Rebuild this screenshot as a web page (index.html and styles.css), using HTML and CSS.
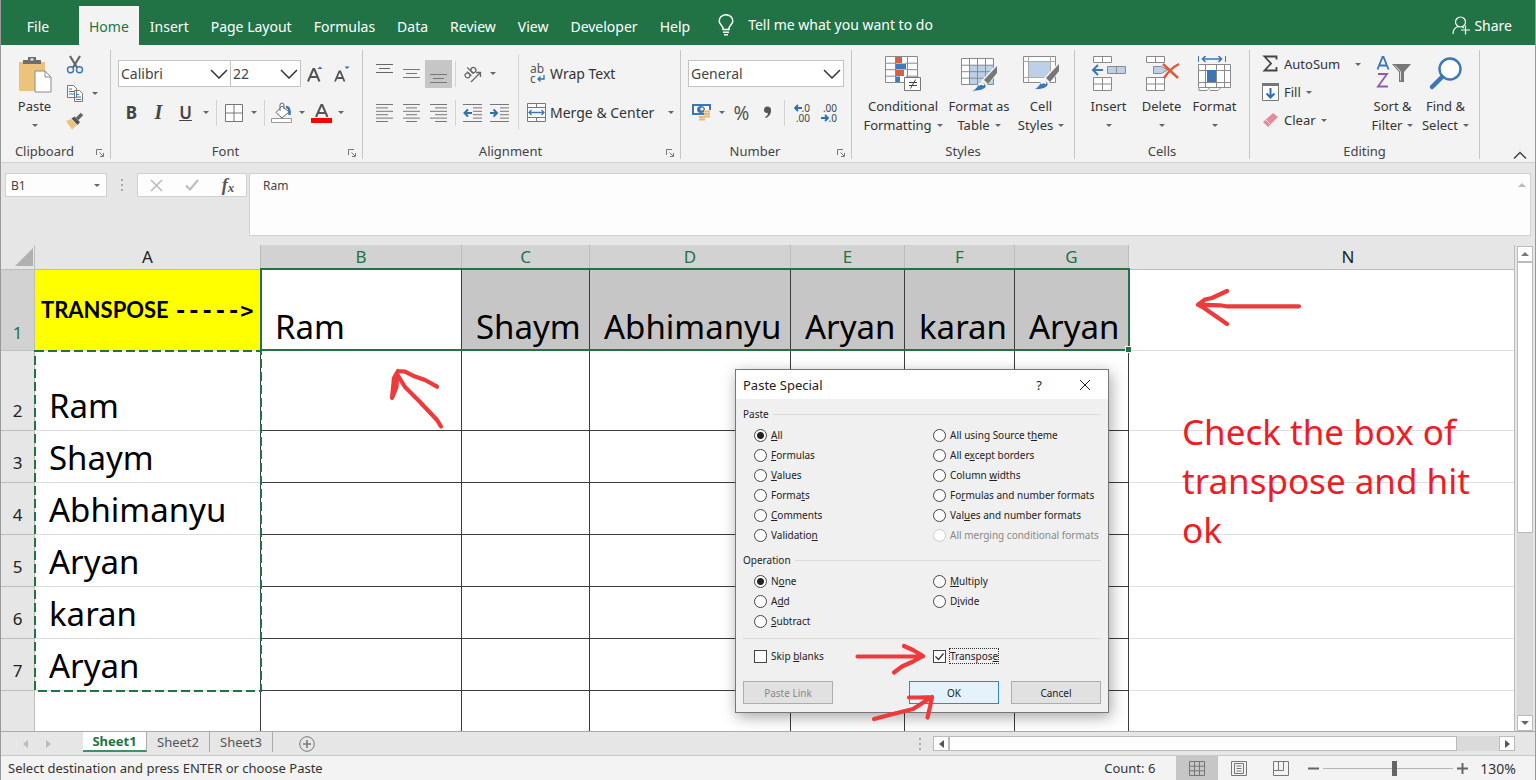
FILE: index.html
```html
<!DOCTYPE html>
<html lang="en">
<head>
<meta charset="utf-8">
<title>Spreadsheet - Paste Special</title>
<link rel="stylesheet" href="styles.css">
</head>
<body>
<div class="app">
  <nav class="tabs" aria-label="Ribbon tabs">
    <button class="tab tab-file">File</button>
    <button class="tab tab-active">Home</button>
    <button class="tab">Insert</button>
    <button class="tab">Page Layout</button>
    <button class="tab">Formulas</button>
    <button class="tab">Data</button>
    <button class="tab">Review</button>
    <button class="tab">View</button>
    <button class="tab">Developer</button>
    <button class="tab">Help</button>
    <button class="tell-me">
      <svg width="16" height="22" viewBox="0 0 16 22" fill="none" stroke="#fff" stroke-width="1.5"><path d="M5 15.500V14C5 12 1.200 10.500 1.200 7a6.800 6.300 0 0 1 13.600 0c0 3.500-3.800 5-3.800 7v1.500zM5 18.300h6M6 20.800h4"/></svg>
      <span>Tell me what you want to do</span>
    </button>
    <button class="share">
      <svg width="18" height="19" viewBox="0 0 18 19" fill="none" stroke="#fff" stroke-width="1.200"><circle cx="8.500" cy="6" r="5"/><path d="M1 18c0-4 2-6.500 5-7.500M10 10.500l2 1.500M13.500 9.500v9M9 14h9"/></svg>
      <span>Share</span>
    </button>
  </nav>

  <section class="ribbon" aria-label="Home ribbon">
    <div class="group group-clipboard">
      <div class="group-body">
        <button class="big">
          <span class="big-icon"><svg width="34" height="38" viewBox="0 0 34 38"><path d="M1 6h26v29H1z" fill="#ecc37c"/><path d="M5 8V4h5V1h8v3h5v4z" fill="#6e6e6e"/><path d="M12.500 2.500h3v2h-3z" fill="#f3f3f3"/><path d="M17 15h10l6 6v15H17z" fill="#fff" stroke="#8a8a8a"/><path d="M27 15v6h6" fill="none" stroke="#8a8a8a"/></svg></span>
          <span>Paste</span><i class="caret"></i>
        </button>
        <div class="stack-icons">
          <button class="tool" aria-label="Cut"><svg width="18" height="19" viewBox="0 0 18 19" fill="none"><path d="M4 1l7 11.500M14 1L7 12.500" stroke="#666" stroke-width="2.200"/><circle cx="4.500" cy="14.800" r="3" stroke="#3b76b5" stroke-width="1.400"/><circle cx="13.500" cy="14.800" r="3" stroke="#3b76b5" stroke-width="1.400"/></svg></button>
          <span class="pair"><button class="tool" aria-label="Copy"><svg width="18" height="19" viewBox="0 0 18 19" fill="#fff" stroke="#777"><path d="M1.500 1.500h6l3 3v9h-9zM8.500 6.500h5l3 3v8h-8z"/><path d="M3 5h3M3 7.500h5M3 10h5M10 10.500h3M10 13h5M10 15.500h5" stroke="#3b76b5"/></svg></button><button class="drop" aria-label="Copy options"><i class="caret"></i></button></span>
          <button class="tool" aria-label="Format painter"><svg width="19" height="18" viewBox="0 0 19 18"><path d="M1 9l5-2 6 6-5 4.500z" fill="#ecc37c"/><path d="M6.500 6.500l3-2 5.500 5.500-2.500 3z" fill="#555"/><path d="M12 7l5-5" stroke="#666" stroke-width="3.500"/></svg></button>
        </div>
      </div>
      <div class="group-label">Clipboard<svg class="launcher" width="8" height="8" viewBox="0 0 8 8" fill="none" stroke="#777"><path d="M.5 6V.5H6M3.500 3.500L7 7M7.500 4v3.500H4"/></svg></div>
    </div>

    <div class="group group-font">
      <div class="group-body">
        <div class="rows">
          <div class="row">
            <span class="combo combo-font"><select aria-label="Font"><option>Calibri</option></select><svg width="18" height="10" viewBox="0 0 18 10" fill="none" stroke="#333" stroke-width="1.500"><path d="M1 1l8 8 8-8"/></svg></span>
            <span class="combo combo-size"><select aria-label="Font size"><option>22</option></select><svg width="18" height="10" viewBox="0 0 18 10" fill="none" stroke="#333" stroke-width="1.500"><path d="M1 1l8 8 8-8"/></svg></span>
            <button class="tool" aria-label="Increase font size"><svg width="18" height="18" viewBox="0 0 18 18"><path d="M2 16.500L7.300 4h1L13.500 16.500M4 12h7.500" fill="none" stroke="#555" stroke-width="2"/><path d="M11.500 4L14 1.500 16.500 4z" fill="#2f6eb0"/></svg></button>
            <button class="tool" aria-label="Decrease font size"><svg width="18" height="18" viewBox="0 0 18 18"><path d="M2 16.500L6.300 6.500h1L11.500 16.500M4 13h6" fill="none" stroke="#555" stroke-width="1.800"/><path d="M11.500 1.500h5L14 4z" fill="#2f6eb0"/></svg></button>
          </div>
          <div class="row">
            <button class="tool bold">B</button><button class="tool italic">I</button><button class="tool under">U</button><button class="drop" aria-label="Underline options"><i class="caret"></i></button>
            <i class="sep"></i>
            <button class="tool" aria-label="Borders"><svg width="18" height="18" viewBox="0 0 18 18" fill="#fff" stroke="#777"><path d="M.5.5h17v17H.5zM9 .5v17M.5 9h17"/></svg></button><button class="drop" aria-label="Border options"><i class="caret"></i></button>
            <i class="sep"></i>
            <button class="tool" aria-label="Fill color"><svg width="22" height="22" viewBox="0 0 22 22" fill="none"><path d="M11 4l7 6-7 6-6-5.500z" fill="#fff" stroke="#666"/><path d="M9 9V3a2 2 0 0 1 4 0v4" stroke="#666"/><path d="M15 5c3 0 4 3 3.500 8" stroke="#3b76b5" stroke-width="2.400"/><path d="M.5 16.500h20v4H.5z" fill="#fff" stroke="#999"/></svg></button><button class="drop" aria-label="Fill options"><i class="caret"></i></button>
            <button class="tool tool-slim" aria-label="Font color"><svg width="22" height="22" viewBox="0 0 22 22"><path d="M5 15L10.300 3h1L16.500 15M7 11h8" fill="none" stroke="#555" stroke-width="2"/><path d="M0 16h21v5H0z" fill="#f00"/></svg></button><button class="drop" aria-label="Font color options"><i class="caret"></i></button>
          </div>
        </div>
      </div>
      <div class="group-label">Font<svg class="launcher" width="8" height="8" viewBox="0 0 8 8" fill="none" stroke="#777"><path d="M.5 6V.5H6M3.500 3.500L7 7M7.500 4v3.500H4"/></svg></div>
    </div>

    <div class="group group-align">
      <div class="group-body">
        <div class="rows">
          <div class="row">
            <button class="tool" aria-label="Top align"><svg width="17" height="22" viewBox="0 0 17 22" stroke="#666"><path d="M0 1.500h17M3 5.500h11M0 9.500h17"/></svg></button>
            <button class="tool" aria-label="Middle align"><svg width="17" height="22" viewBox="0 0 17 22" stroke="#777"><path d="M0 6.500h17M3 10.500h11M0 14.500h17"/></svg></button>
            <button class="tool pressed" aria-label="Bottom align"><svg width="17" height="22" viewBox="0 0 17 22" stroke="#777"><path d="M0 11.500h17M3 15.500h11M0 19.500h17"/></svg></button>
            <i class="sep"></i>
            <button class="tool" aria-label="Orientation"><svg width="18" height="18" viewBox="0 0 18 18" fill="none" stroke="#666" stroke-width="1.300"><g transform="rotate(-45 6 8)"><ellipse cx="2.500" cy="8" rx="2.300" ry="2.500"/><path d="M5 5v6M8 2v9"/><ellipse cx="10.500" cy="8.300" rx="2.400" ry="2.600"/></g><path d="M7 17l9-9M12 7.500h4.500V12"/></svg></button><button class="drop" aria-label="Orientation options"><i class="caret"></i></button>
          </div>
          <div class="row">
            <button class="tool" aria-label="Align left"><svg width="17" height="18" viewBox="0 0 17 18" stroke="#777"><path d="M0 .5h17M0 3.900h12M0 7.300h17M0 10.700h12M0 14.100h17M0 17.500h12"/></svg></button>
            <button class="tool" aria-label="Align center"><svg width="17" height="18" viewBox="0 0 17 18" stroke="#777"><path d="M0 .5h17M3 3.900h11M0 7.300h17M3 10.700h11M0 14.100h17M3 17.500h11"/></svg></button>
            <button class="tool" aria-label="Align right"><svg width="17" height="18" viewBox="0 0 17 18" stroke="#777"><path d="M0 .5h17M5 3.900h12M0 7.300h17M5 10.700h12M0 14.100h17M5 17.500h12"/></svg></button>
            <i class="sep"></i>
            <button class="tool" aria-label="Decrease indent"><svg width="19" height="18" viewBox="0 0 19 18" fill="none" stroke="#777"><path d="M0 .5h19M10 3.900h9M10 7.300h9M10 10.700h9M10 14.100h9M0 17.500h19"/><path d="M9 9H1M5 5.500L1.500 9 5 12.500" stroke="#2f6eb0" stroke-width="2"/></svg></button>
            <button class="tool" aria-label="Increase indent"><svg width="19" height="18" viewBox="0 0 19 18" fill="none" stroke="#777"><path d="M0 .5h19M10 3.900h9M10 7.300h9M10 10.700h9M10 14.100h9M0 17.500h19"/><path d="M0 9h7M3.500 5.500L7 9l-3.500 3.500" stroke="#2f6eb0" stroke-width="2"/></svg></button>
          </div>
        </div>
        <i class="sep sep-tall"></i>
        <div class="rows rows-wide">
          <div class="row"><button class="labelled"><span class="wrap-icon">ab<span>c<svg width="8" height="7" viewBox="0 0 8 7" fill="none" stroke="#2f6eb0" stroke-width="1.300"><path d="M7 0v4H1M3.500 1.500L1 4l2.500 2.500"/></svg></span></span><span>Wrap Text</span></button></div>
          <div class="row"><button class="labelled"><svg width="19" height="19" viewBox="0 0 19 19" fill="#fff" stroke="#777"><path d="M.5.500h18v18H.5zM.5 4.500h18M.5 14.500h18M9.500.500v4M9.500 14.500v4"/><path d="M2 9.500h15M4.500 7L2 9.500 4.500 12M14.500 7L17 9.500 14.500 12" fill="none" stroke="#3b76b5" stroke-width="1.300"/></svg><span>Merge &amp; Center</span><i class="caret"></i></button></div>
        </div>
      </div>
      <div class="group-label">Alignment<svg class="launcher" width="8" height="8" viewBox="0 0 8 8" fill="none" stroke="#777"><path d="M.5 6V.5H6M3.500 3.500L7 7M7.500 4v3.500H4"/></svg></div>
    </div>

    <div class="group group-number">
      <div class="group-body">
        <div class="rows">
          <div class="row"><span class="combo combo-number"><select aria-label="Number format"><option>General</option></select><svg width="18" height="10" viewBox="0 0 18 10" fill="none" stroke="#333" stroke-width="1.500"><path d="M1 1l8 8 8-8"/></svg></span></div>
          <div class="row">
            <button class="tool" aria-label="Accounting format"><svg width="20" height="19" viewBox="0 0 20 19"><path d="M0 1h19v11H0z" fill="#3b76b5"/><path d="M2 3h15v7H2z" fill="#fff"/><ellipse cx="9" cy="6.500" rx="4" ry="3.500" fill="#3b76b5"/><circle cx="10" cy="6" r="1.600" fill="#fff"/><path d="M12 7h7v9h-7zM7 12h7v6H7z" fill="#f3f3f3"/><path d="M12 8.500h6M12 11h6M12 13.500h6M7 14h6M7 16.500h6" stroke="#e8b871" stroke-width="1.800"/></svg></button><button class="drop" aria-label="Accounting options"><i class="caret"></i></button>
            <button class="tool tool-slim percent">%</button>
            <button class="tool" aria-label="Comma style"><svg width="10" height="14" viewBox="0 0 10 14"><path d="M1 4a3.500 3.500 0 0 1 7 0c0 4-1.500 6.500-5.500 8l-.5-1c2-1 3-2.500 3-4C2.500 7.500 1 6 1 4z" fill="#555"/></svg></button>
            <i class="sep"></i>
            <button class="tool decimals" aria-label="Increase decimal"><span><svg width="8" height="8" viewBox="0 0 8 8" fill="none" stroke="#2f6eb0" stroke-width="1.800"><path d="M8 4H1M4 1L1 4l3 3"/></svg>.0</span><span>.00</span></button>
            <button class="tool decimals" aria-label="Decrease decimal"><span>.00</span><span><svg width="8" height="8" viewBox="0 0 8 8" fill="none" stroke="#2f6eb0" stroke-width="1.800"><path d="M0 4h7M4 1l3 3-3 3"/></svg>.0</span></button>
          </div>
        </div>
      </div>
      <div class="group-label">Number<svg class="launcher" width="8" height="8" viewBox="0 0 8 8" fill="none" stroke="#777"><path d="M.5 6V.5H6M3.500 3.500L7 7M7.500 4v3.500H4"/></svg></div>
    </div>

    <div class="group group-styles">
      <div class="group-body">
        <button class="big big-wide">
          <span class="big-icon"><svg width="36" height="36" viewBox="0 0 36 36" fill="none"><path d="M.5.500h32v26H.5z" fill="#fff"/><path d="M11 1h6v6h-6zM11 14h8v6h-8z" fill="#d9603f"/><path d="M11 7.500h10v6H11zM11 20.500h4v6h-4z" fill="#3f7cbc"/><path d="M.5.500h32v26H.5zM10.500.500v26M22.500.500v26M.5 7.200h10M.5 13.700h10M.5 20.200h10M21 7.200h11M21 13.700h11M21 20.200h11" stroke="#8a8a8a"/><path d="M19.500 21.500h16v13h-16z" fill="#fff" stroke="#777"/><path d="M24 26.500h8M24 29.500h8M30.500 23.500l-5 9" stroke="#444"/></svg></span>
          <span>Conditional</span><span>Formatting<i class="caret"></i></span>
        </button>
        <button class="big big-mid">
          <span class="big-icon"><svg width="36" height="36" viewBox="0 0 36 36" fill="none"><path d="M.5 2.500h32v26H.5z" fill="#fff"/><path d="M9 9h23v19H9z" fill="#bcd0e8"/><path d="M.5 2.500h32v26H.5zM8.500 2.500v26M16.500 2.500v26M24.500 2.500v26M.5 9.200h32M.5 15.700h32M.5 22.200h32" stroke="#8a8a8a"/><path d="M20 25L36 8v11L25 30z" fill="#f3f3f3"/><path d="M23 24L36 10v7L27 28z" fill="#777"/><path d="M9 35c5-1 6-3 8-6s7-3 8 0-4 7-16 6z" fill="#3b76b5" stroke="#f3f3f3"/><path d="M18 29c2-2 4-1 5 0" stroke="#fff" stroke-width="2"/></svg></span>
          <span>Format as</span><span>Table<i class="caret"></i></span>
        </button>
        <button class="big big-small">
          <span class="big-icon"><svg width="36" height="36" viewBox="0 0 36 36" fill="none"><path d="M.5.500h32v26H.5z" fill="#fff" stroke="#8a8a8a"/><path d="M6 6h21v15H6z" fill="#bcd0e8"/><path d="M5.500.500v26M27.500.500v26M.5 5.500h32M.5 21.500h32" stroke="#aaa"/><path d="M20 23L36 6v11L25 28z" fill="#f3f3f3"/><path d="M23 22L36 8v7L27 26z" fill="#777"/><path d="M9 33.500c5-1 6-3 8-6s7-3 8 0-4 7-16 6z" fill="#3b76b5" stroke="#f3f3f3"/><path d="M18 27.500c2-2 4-1 5 0" stroke="#fff" stroke-width="2"/></svg></span>
          <span>Cell</span><span>Styles<i class="caret"></i></span>
        </button>
      </div>
      <div class="group-label">Styles</div>
    </div>

    <div class="group group-cells">
      <div class="group-body">
        <button class="big">
          <span class="big-icon"><svg width="36" height="36" viewBox="0 0 36 36" fill="#fff" stroke="#8a8a8a"><path d="M2.500.500h18v6h-18zM11.500.500v6M2.500 21.500h18v13h-18zM11.500 21.500v13M2.500 28h18"/><path d="M16.500 10.500h18v7h-18zM25.500 10.500v7" fill="#bcd0e8"/><path d="M12 14H2M7 9l-5 5 5 5" fill="none" stroke="#3b76b5" stroke-width="2"/></svg></span>
          <span>Insert</span><i class="caret"></i>
        </button>
        <button class="big">
          <span class="big-icon"><svg width="36" height="36" viewBox="0 0 36 36" fill="#fff" stroke="#8a8a8a"><path d="M2.500.500h18v6h-18zM11.500.500v6M2.500 21.500h18v13h-18zM11.500 21.500v13M2.500 28h18"/><path d="M9.500 10.500h8l6 3.500-6 3.500h-8z" fill="#bcd0e8"/><path d="M19 8l15 14M35 8c-6 3-11 8-15 14" fill="none" stroke="#db5a38" stroke-width="2.400"/></svg></span>
          <span>Delete</span><i class="caret"></i>
        </button>
        <button class="big">
          <span class="big-icon"><svg width="36" height="36" viewBox="0 0 36 36" fill="#fff" stroke="#8a8a8a"><path d="M1.500 8.500h32v23h-32zM8.500 8.500v23M19.500 8.500v23M27.500 8.500v23M1.500 14.500h32M1.500 26.500h32M2 32v2.500h8l3-3M13 34.500h8l3-3"/><path d="M10 14h9v12h-9z" fill="#3b76b5" stroke="none"/><path d="M1.500 0v6M28.500 0v6" stroke="#3b76b5"/><path d="M5 3h20M8.500 0l-3 3 3 3M21.500 0l3 3-3 3" fill="none" stroke="#3b76b5" stroke-width="1.600"/></svg></span>
          <span>Format</span><i class="caret"></i>
        </button>
      </div>
      <div class="group-label">Cells</div>
    </div>

    <div class="group group-editing">
      <div class="group-body">
        <div class="edit-list">
          <button class="labelled"><svg width="17" height="18" viewBox="0 0 17 18" fill="none" stroke="#444" stroke-width="1.800"><path d="M14.500 4.500V1.500H2.500L9 8.500l-6.500 7h12v-3.500"/></svg><span>AutoSum</span><i class="caret caret-far"></i></button>
          <button class="labelled"><svg width="17" height="18" viewBox="0 0 17 18" fill="#fff" stroke="#777"><path d="M.5.500h16v17H.5z"/><path d="M0 1.500h17" stroke-width="3"/><path d="M8.500 5v9M4.500 10.500l4 4 4-4" fill="none" stroke="#2f6eb0" stroke-width="2"/></svg><span>Fill</span><i class="caret"></i></button>
          <button class="labelled"><svg width="17" height="18" viewBox="0 0 17 18"><path d="M1 11l10-9 5 4-10 10z" fill="#e68a9b"/><path d="M3.500 8.500l5 5" stroke="#fbe3e7"/></svg><span>Clear</span><i class="caret"></i></button>
        </div>
        <button class="big">
          <span class="big-icon"><svg width="36" height="36" viewBox="0 0 36 36" fill="none"><path d="M2.500 13.500L7.500 1h1l5 12.500M4 9.500h8" stroke="#3b76b5" stroke-width="1.800"/><path d="M3 18h9L3 30.500h10" stroke="#9259b0" stroke-width="1.800"/><path d="M17 8h19l-7 8v10h-5V16z" fill="#777"/><path d="M20 9.500l5.500 6v9" stroke="#ddd"/></svg></span>
          <span>Sort &amp;</span><span>Filter<i class="caret"></i></span>
        </button>
        <button class="big">
          <span class="big-icon"><svg width="36" height="36" viewBox="0 0 36 36" fill="none" stroke="#3b76b5"><circle cx="22" cy="13" r="10.500" fill="#fff" stroke-width="2.400"/><path d="M14 21L4 31" stroke-width="4.500" stroke-linecap="round"/></svg></span>
          <span>Find &amp;</span><span>Select<i class="caret"></i></span>
        </button>
      </div>
      <div class="group-label">Editing</div>
    </div>
    <button class="collapse" aria-label="Collapse ribbon"><svg width="14" height="8" viewBox="0 0 14 8" fill="none" stroke="#444" stroke-width="1.500"><path d="M1 7.500l6-6 6 6"/></svg></button>
  </section>

  <section class="formula-bar" aria-label="Formula bar">
    <div class="name-box"><input type="text" value="B1" aria-label="Name box"><i class="caret"></i></div>
    <svg width="3" height="24" viewBox="0 0 3 24" fill="#aaa"><path d="M0 6h2v2H0zM0 11h2v2H0zM0 16h2v2H0z"/></svg>
    <div class="fx">
      <button aria-label="Cancel entry"><svg width="13" height="13" viewBox="0 0 13 13" stroke="#bbb" stroke-width="1.600"><path d="M1 1l11 11M12 1L1 12"/></svg></button>
      <button aria-label="Enter"><svg width="14" height="12" viewBox="0 0 14 12" fill="none" stroke="#bbb" stroke-width="2"><path d="M1 6.500l4 4L13 1"/></svg></button>
      <button class="fx-label" aria-label="Insert function">f<sub>x</sub></button>
    </div>
    <div class="formula"><textarea aria-label="Formula" rows="1">Ram</textarea><i class="caret caret-up"></i></div>
  </section>

  <main class="sheet-area">
    <div class="sheet">
      <table>
        <colgroup><col class="c-head"><col class="c-a"><col class="c-b"><col class="c-c"><col class="c-d"><col class="c-e"><col class="c-f"><col class="c-g"><col></colgroup>
        <thead><tr><th class="corner"><svg width="18" height="18" viewBox="0 0 18 18"><path d="M18 0v18H0z" fill="#b0b0b0"/></svg></th><th>A</th><th class="sel">B</th><th class="sel">C</th><th class="sel">D</th><th class="sel">E</th><th class="sel">F</th><th class="sel">G</th><th>N</th></tr></thead>
        <tbody>
          <tr class="tall first"><th class="sel">1</th><td class="banner">TRANSPOSE <span>-----&gt;</span></td><td>Ram</td><td class="shade">Shaym</td><td class="shade">Abhimanyu</td><td class="shade">Aryan</td><td class="shade">karan</td><td class="shade">Aryan</td><td class="plain"></td></tr>
          <tr class="tall"><th>2</th><td>Ram</td><td></td><td></td><td></td><td></td><td></td><td></td><td class="plain"></td></tr>
          <tr><th>3</th><td>Shaym</td><td></td><td></td><td></td><td></td><td></td><td></td><td class="plain"></td></tr>
          <tr><th>4</th><td>Abhimanyu</td><td></td><td></td><td></td><td></td><td></td><td></td><td class="plain"></td></tr>
          <tr><th>5</th><td>Aryan</td><td></td><td></td><td></td><td></td><td></td><td></td><td class="plain"></td></tr>
          <tr><th>6</th><td>karan</td><td></td><td></td><td></td><td></td><td></td><td></td><td class="plain"></td></tr>
          <tr><th>7</th><td>Aryan</td><td></td><td></td><td></td><td></td><td></td><td></td><td class="plain"></td></tr>
          <tr><th></th><td></td><td></td><td></td><td></td><td></td><td></td><td></td><td class="plain"></td></tr>
        </tbody>
      </table>
      <div class="selection"><i></i></div>
      <svg class="ants" width="228" height="342" viewBox="0 0 228 342" fill="none" stroke="#217346" stroke-width="2" stroke-dasharray="9 4"><path d="M1 1h226v340H1z"/></svg>
    </div>
    <div class="vscroll">
      <button aria-label="Scroll up"><i class="caret caret-up"></i></button>
      <div class="vthumb"></div>
      <div class="track"></div>
      <button aria-label="Scroll down"><i class="caret caret-down"></i></button>
    </div>
  </main>

  <div class="sheet-bar">
    <div class="sheet-nav"><i class="tri tri-left"></i><i class="tri tri-right"></i></div>
    <button class="sheet-tab sheet-tab-active">Sheet1</button>
    <button class="sheet-tab">Sheet2</button>
    <button class="sheet-tab">Sheet3</button>
    <button class="add-sheet" aria-label="New sheet"><svg width="16" height="16" viewBox="0 0 16 16" fill="none" stroke="#777"><circle cx="8" cy="8" r="7.300"/><path d="M8 4v8M4 8h8" stroke-width="1.500"/></svg></button>
    <svg class="grip" width="2" height="12" viewBox="0 0 2 12" fill="#aaa"><path d="M0 0h2v2H0zM0 5h2v2H0zM0 10h2v2H0z"/></svg>
    <div class="hscroll">
      <button aria-label="Scroll left"><i class="tri tri-left tri-dark"></i></button>
      <div class="hthumb"></div><div class="track"></div>
      <button aria-label="Scroll right"><i class="tri tri-right tri-dark"></i></button>
    </div>
  </div>

  <footer class="status">
    <span class="status-text">Select destination and press ENTER or choose Paste</span>
    <span class="count">Count: 6</span>
    <button class="view view-active" aria-label="Normal view"><svg width="16" height="15" viewBox="0 0 16 15" fill="none" stroke="#777"><path d="M.5.500h15v14H.5zM5.500.500v14M10.500.500v14M.5 5.200h15M.5 9.800h15"/></svg></button>
    <button class="view" aria-label="Page layout view"><svg width="16" height="15" viewBox="0 0 16 15" fill="none" stroke="#777"><path d="M.5.500h15v14H.5zM3.500 2.500h9v10h-9zM5.500 5h5M5.500 7.500h5M5.500 10h5"/></svg></button>
    <button class="view" aria-label="Page break view"><svg width="16" height="15" viewBox="0 0 16 15" fill="none" stroke="#777"><path d="M.5.500h15v14H.5zM.5 9.500h10v-9M5.500.500v9"/></svg></button>
    <button class="zoom-btn" aria-label="Zoom out"><svg width="11" height="11" viewBox="0 0 11 11" stroke="#666" stroke-width="2"><path d="M0 5.500h11"/></svg></button>
    <input class="zoom-range" type="range" min="0" max="100" value="55" aria-label="Zoom">
    <button class="zoom-btn" aria-label="Zoom in"><svg width="11" height="11" viewBox="0 0 11 11" stroke="#666" stroke-width="2"><path d="M0 5.500h11M5.500 0v11"/></svg></button>
    <span class="zoom-value">130%</span>
  </footer>

  <div class="dialog" role="dialog" aria-labelledby="dlg-title">
    <header class="dlg-head"><h1 id="dlg-title">Paste Special</h1><button class="help">?</button><button class="close" aria-label="Close"><svg width="10" height="10" viewBox="0 0 10 10" stroke="#222"><path d="M0 0l10 10M10 0L0 10"/></svg></button></header>
    <form class="dlg-body">
      <fieldset>
        <legend>Paste</legend>
        <div class="options">
          <label><input type="radio" name="paste" checked><span><u>A</u>ll</span></label>
          <label><input type="radio" name="paste"><span>All using Source t<u>h</u>eme</span></label>
          <label><input type="radio" name="paste"><span><u>F</u>ormulas</span></label>
          <label><input type="radio" name="paste"><span>All e<u>x</u>cept borders</span></label>
          <label><input type="radio" name="paste"><span><u>V</u>alues</span></label>
          <label><input type="radio" name="paste"><span>Column <u>w</u>idths</span></label>
          <label><input type="radio" name="paste"><span>Forma<u>t</u>s</span></label>
          <label><input type="radio" name="paste"><span>Fo<u>r</u>mulas and number formats</span></label>
          <label><input type="radio" name="paste"><span><u>C</u>omments</span></label>
          <label><input type="radio" name="paste"><span>Val<u>u</u>es and number formats</span></label>
          <label><input type="radio" name="paste"><span>Validatio<u>n</u></span></label>
          <label class="off"><input type="radio" name="paste" disabled><span>All merging conditional formats</span></label>
        </div>
      </fieldset>
      <fieldset>
        <legend>Operation</legend>
        <div class="options">
          <label><input type="radio" name="op" checked><span>N<u>o</u>ne</span></label>
          <label><input type="radio" name="op"><span><u>M</u>ultiply</span></label>
          <label><input type="radio" name="op"><span>A<u>d</u>d</span></label>
          <label><input type="radio" name="op"><span>D<u>i</u>vide</span></label>
          <label><input type="radio" name="op"><span><u>S</u>ubtract</span></label>
        </div>
      </fieldset>
      <div class="options checks">
        <label><input type="checkbox"><span>Skip <u>b</u>lanks</span></label>
        <label><input type="checkbox" checked><span class="focus">Transpos<u>e</u></span></label>
      </div>
      <div class="dlg-buttons">
        <button type="button" disabled>Paste Link</button>
        <button type="button" class="ok">OK</button>
        <button type="button">Cancel</button>
      </div>
    </form>
  </div>

  <p class="note">Check the box of transpose and hit ok</p>
  <svg class="ink" width="1536" height="780" viewBox="0 0 1536 780" fill="none" stroke="#ee3a3a" stroke-width="4.200" stroke-linecap="round" stroke-linejoin="round">
    <path d="M1227 291L1212 298l-7 1.500-7 5.200 22 .6 6 1h73M1198 304.700L1204 308l13 9 10 7"/>
    <path d="M441 426.500L437 420l-17-18-15-15-8-13-3 4-1 10-1 10 4.500-11 .5-10M398 371l7 .7 8 4 12 4.300 12 6.700M398 371l-3 5"/>
    <path d="M857.500 656.500H923M904 646l9 4 10 6-10 5.500-11 5-8 6"/>
    <path d="M874 719l19-5 20-5 19-12M909 697.500h10l13-.5-2 10-2.500 10.500"/>
  </svg>
</div>
</body>
</html>
```

FILE: styles.css
```css
* { box-sizing: border-box; }

body {
  margin: 0;
  font-family: "Noto Sans", "Open Sans", sans-serif;
  font-size: 13px;
  color: #333;
  background: #e6e6e6;
}

button {
  margin: 0;
  padding: 0;
  border: 0;
  background: none;
  font: inherit;
  color: inherit;
}

svg { display: block; flex: none; }

.app {
  position: relative;
  display: flex;
  flex-direction: column;
  height: 100vh;
  min-height: 600px;
  overflow: hidden;
  border-left: 1px solid #999;
  border-right: 1px solid #999;
}

/* Tabs */
.tabs {
  flex: none;
  display: flex;
  height: 45px;
  padding-top: 6px;
  background: #217346;
  color: #fff;
  font-size: 14px;
}
.tab { padding: 2px 11px 0; white-space: nowrap; }
.tab-file { width: 78px; padding-left: 7px; }
.tab-active { padding: 2px 10px 0; background: #f3f3f3; color: #217346; }
.tell-me, .share { display: flex; align-items: center; gap: 14px; white-space: nowrap; }
.tell-me { margin-left: 17px; padding-bottom: 2px; }
.share { margin-left: auto; margin-right: 23px; gap: 4px; }

/* Ribbon */
.ribbon {
  flex: none;
  display: flex;
  height: 118px;
  padding: 5px 0 3px;
  background: #f3f3f3;
  border-bottom: 1px solid #d2d2d2;
}
.group {
  display: flex;
  flex-direction: column;
  flex: none;
  border-right: 1px solid #c6c6c6;
}
.group-clipboard { width: 110px; }
.group-font { width: 252px; }
.group-align { width: 318px; }
.group-number { width: 171px; }
.group-styles { width: 223px; }
.group-cells { width: 175px; }
.group-editing { width: 230px; }
.group-body { flex: 1; display: flex; padding: 4px 0 0 7px; }
.group-label {
  position: relative;
  height: 16px;
  line-height: 16px;
  text-align: center;
  color: #444;
}
.group-clipboard .group-label,
.group-font .group-label,
.group-align .group-label,
.group-number .group-label { padding-right: 22px; }
.launcher { position: absolute; right: 6px; bottom: 2px; }

.caret {
  display: inline-block;
  flex: none;
  border: 3px solid transparent;
  border-top-color: #666;
  border-bottom: 0;
}
.caret-up { border-bottom: 4px solid #777; border-top: 0; }
.caret-down { border-width: 4px 4px 0; }

.big {
  display: flex;
  flex-direction: column;
  align-items: center;
  width: 53px;
  line-height: 19px;
  white-space: nowrap;
}
.big > .caret { margin-top: 8px; }
.big span > .caret { margin-left: 5px; vertical-align: 3px; }
.big-icon { height: 43px; padding-top: 2px; }
.big-wide { width: 84px; }
.big-mid { width: 68px; }
.big-small { width: 56px; }
.group-styles .group-body { padding-left: 9px; }

.stack-icons { display: flex; flex-direction: column; }
.stack-icons .tool { width: 27px; height: 28px; }
.stack-icons .tool:first-child { height: 20px; }
.pair { display: flex; height: 38px; align-items: center; }
.stack-icons > .tool:last-child { height: 18px; }

.row { display: flex; align-items: center; height: 39px; }
.tool {
  display: flex;
  flex: none;
  align-items: center;
  justify-content: center;
  width: 27px;
  height: 28px;
  color: #444;
}
.tool-slim { width: 25px; }
.pressed { background: #c6c6c6; }
.drop { display: flex; flex: none; align-items: center; justify-content: center; width: 14px; height: 28px; }
.sep { flex: none; width: 1px; height: 26px; margin: 0 3px; background: #d4d4d4; }
.sep-tall { height: 74px; margin: 1px 8px 0 0; }
.bold { font-size: 17px; font-weight: 700; }
.italic { font-family: "Liberation Serif", serif; font-size: 20px; font-style: italic; font-weight: 700; }
.under { font-size: 17px; font-weight: 600; text-decoration: underline; }
.percent { font-size: 19px; color: #555; }

.combo { position: relative; display: flex; height: 27px; }
.combo select {
  width: 100%;
  padding: 0 2px;
  border: 1px solid #c3c3c3;
  border-radius: 0;
  background: #fff;
  color: #444;
  font: inherit;
  font-size: 14px;
  appearance: none;
}
.combo svg { position: absolute; right: 3px; top: 9px; pointer-events: none; }
.combo-font { width: 113px; }
.combo-size { width: 70px; }
.combo-size select { border-left: 0; }
.combo-number { width: 156px; }

.group-align .group-body > .rows:first-child { width: 148px; padding-left: 1px; }
.labelled { display: flex; align-items: center; gap: 4px; white-space: nowrap; }
.labelled .caret { margin-left: 10px; }
.rows-wide { font-size: 14px; }
.wrap-icon { width: 19px; padding-left: 3px; font-size: 12px; line-height: 10px; text-align: left; color: #555; }
.wrap-icon > span { display: flex; align-items: center; gap: 1px; }
.decimals { flex-direction: column; font-size: 10px; line-height: 10px; align-items: flex-end; padding-right: 5px; }
.decimals span { display: flex; align-items: center; }

.group-editing .group-body { padding: 0 0 0 12px; }
.group-editing .big { margin-top: 4px; }
.edit-list { width: 104px; }
.edit-list .labelled { height: 28px; gap: 5px; }
.edit-list .caret { margin-left: 0; }
.edit-list .caret-far { margin-left: 10px; }
.collapse { margin: auto 8px 0 auto; }

/* Formula bar */
.formula-bar {
  flex: none;
  display: flex;
  align-items: flex-start;
  height: 82px;
  padding: 10px 4px 9px;
  font-size: 12px;
}
.formula-bar > svg { margin: 0 13px 0 14px; }
.name-box, .fx, .formula { display: flex; background: #fdfdfd; border: 1px solid #d0d0d0; }
.name-box { width: 102px; height: 24px; align-items: center; padding-right: 6px; }
.name-box input {
  flex: 1;
  min-width: 0;
  padding: 0 5px;
  border: 0;
  background: none;
  font: inherit;
  color: #444;
}
.fx { width: 110px; height: 24px; }
.fx button { flex: 1; display: flex; align-items: center; justify-content: center; }
.fx .fx-label { font-family: "Liberation Serif", serif; font-style: italic; font-weight: 700; font-size: 18px; color: #555; }
.fx sub { font-size: 13px; align-self: flex-end; }
.formula { flex: 1; align-items: flex-start; height: 63px; margin-left: 2px; padding-right: 4px; }
.formula textarea {
  flex: 1;
  align-self: stretch;
  padding: 3px 13px;
  border: 0;
  background: none;
  font: inherit;
  color: #444;
  resize: none;
}
.formula .caret { margin-top: 9px; border-width: 0 4px 4px; border-bottom-color: #bbb; }

/* Grid */
.sheet-area { flex: 1; min-height: 0; display: flex; border-bottom: 1px solid #ababab; }
.sheet { position: relative; flex: 1; overflow: hidden; border-right: 1px solid #bbb; }
/* The last column runs on past the right edge of the view */
.sheet table { width: calc(100% + 54px); table-layout: fixed; border-collapse: separate; border-spacing: 0; background: #fff; }
.c-head { width: 34px; }
.c-a { width: 226px; }
.c-b, .c-d { width: 201px; }
.c-c { width: 128px; }
.c-e { width: 114px; }
.c-f { width: 110px; }
.c-g { width: 114px; }
.sheet th {
  padding: 0;
  border-right: 1px solid #bdbdbd;
  border-bottom: 1px solid #bdbdbd;
  background: #e6e6e6;
  color: #222;
  font-size: 17px;
  font-weight: 400;
  line-height: 20px;
}
.sheet thead th { height: 25px; }
.sheet th.corner svg { margin-left: 14px; }
.sheet .sel { background: #d2d2d2; color: #217346; }
.sheet tbody th { height: 52px; padding-bottom: 9px; vertical-align: bottom; }
.sheet .tall th { height: 80px; }
.sheet .first th { height: 81px; padding-bottom: 7px; }
.sheet td {
  padding: 0 0 4px 14px;
  border-right: 1px solid #3c3c3c;
  border-bottom: 1px solid #3c3c3c;
  color: #000;
  font-size: 33px;
  line-height: 40px;
  vertical-align: bottom;
  white-space: nowrap;
}
.sheet tbody td:nth-child(2) { border-bottom-color: #ddd; }
.sheet .first td { padding-bottom: 3px; }
.sheet .shade { background: #c6c6c6; }
.sheet .plain { border-color: #e0e0e0; border-right: 0; }
.sheet .first .banner {
  padding: 0 0 0 6px;
  background: #ff0;
  font-family: "Comic Sans MS", Lato, sans-serif;
  font-size: 22px;
  font-weight: 700;
  vertical-align: middle;
}
.banner span { font-family: "DejaVu Sans Mono", monospace; }
.selection {
  position: absolute;
  left: 259px;
  top: 23px;
  width: 870px;
  height: 83px;
  border: 2px solid #217346;
}
.selection i { position: absolute; right: -3px; bottom: -3px; width: 5px; height: 5px; background: #217346; outline: 1px solid #fff; }
.ants { position: absolute; left: 33px; top: 105px; }

.vscroll { display: flex; flex-direction: column; width: 16px; margin: 1px 2px 0; }
.vscroll button, .hscroll button { flex: none; display: flex; align-items: center; justify-content: center; border: 1px solid #bbb; background: #fff; }
.vscroll button { height: 16px; }
.vscroll .caret-up { border-width: 0 4px 4px; }
.vthumb { flex: 59; border: 1px solid #bbb; background: #fff; }
.track { background: #dadada; }
.vscroll .track { flex: 40; }

/* Sheet tabs */
.sheet-bar { flex: none; display: flex; align-items: center; height: 24px; padding-right: 20px; border-bottom: 1px solid #c9c9c9; }
.sheet-nav { display: flex; gap: 18px; width: 82px; padding-left: 22px; }
.tri { border: 4px solid transparent; }
.tri-left { border-left: 0; border-right: 5px solid #bbb; }
.tri-right { border-right: 0; border-left: 5px solid #bbb; }
.tri-left.tri-dark { border-right-color: #555; }
.tri-right.tri-dark { border-left-color: #555; }
.sheet-tab { align-self: flex-start; width: 63px; height: 20px; line-height: 18px; color: #555; border-right: 1px solid #aaa; }
.sheet-tab-active { width: 64px; background: #fff; color: #217346; font-weight: 700; border-bottom: 2px solid #3f9362; }
.add-sheet { margin-left: 26px; }
.grip { margin-left: auto; margin-right: 12px; }
.hscroll { flex: 0 1 582px; display: flex; height: 15px; }
.hscroll button { width: 16px; }
.hthumb { flex: 509; border: 1px solid #bbb; background: #fff; }
.hscroll .track { flex: 42; }

/* Status bar */
.status { flex: none; display: flex; align-items: center; height: 24px; padding: 0 19px 0 7px; background: #f3f3f3; }
.status-text { flex: 1; }
.count { margin-right: 21px; }
.view { display: flex; align-items: center; justify-content: center; width: 42px; height: 24px; }
.view-active { background: #c6c6c6; }
.zoom-btn { padding: 0 4px; }
.view + .zoom-btn { margin-left: 2px; }
.zoom-range { width: 130px; height: 16px; margin: 0; appearance: none; background: linear-gradient(#b5b5b5, #b5b5b5) center / 100% 1px no-repeat; }
.zoom-range::-webkit-slider-thumb { appearance: none; width: 5px; height: 15px; background: #666; }
.zoom-value { margin-left: 8px; font-size: 14px; }

/* Dialog */
.dialog {
  position: absolute;
  left: 734px;
  top: 369px;
  width: 374px;
  border: 1px solid #777;
  background: #f0f0f0;
  box-shadow: 2px 4px 14px rgba(0, 0, 0, 0.35);
  color: #222;
  font-size: 10px;
}
.dlg-head { display: flex; align-items: center; height: 29px; padding: 0 18px 0 7px; background: #fff; }
.dlg-head h1 { flex: 1; margin: 0; font-size: 13px; font-weight: 400; }
.help { margin-right: 38px; font-size: 13px; }
.dlg-body { padding: 7px 7px 8px; }
fieldset { min-width: 0; margin: 0 0 7px; padding: 0; border: 0; }
legend { display: flex; align-items: center; gap: 4px; width: 100%; padding: 0; line-height: 16px; }
legend::after { content: ""; flex: 1; height: 1px; background: #dcdcdc; }
.options { display: grid; grid-template-columns: 179px 1fr; padding: 3px 0 0 11px; }
.options label { display: flex; align-items: center; gap: 4px; height: 20px; white-space: nowrap; }
.options input { flex: none; width: 13px; height: 13px; margin: 0; appearance: none; border: 1px solid #444; background: #fff; }
.options input[type="radio"] { border-radius: 50%; }
.options input[type="radio"]:checked { background: radial-gradient(circle, #222 0 3px, #fff 4px); }
.options input[type="checkbox"]:checked {
  background: #fff url("data:image/svg+xml,%3Csvg xmlns='http://www.w3.org/2000/svg' width='11' height='11' fill='none' stroke='%23333' stroke-width='1.2'%3E%3Cpath d='M1.500 5.500l3 3 5-6'/%3E%3C/svg%3E");
}
.options .off { color: #888; }
.options .off input { border-color: #ccc; }
.focus { outline: 1px dotted #333; }
.checks { padding-top: 7px; border-top: 1px solid #dcdcdc; }
.dlg-buttons { display: flex; gap: 12px; padding-top: 15px; }
.dlg-buttons button { width: 90px; height: 23px; border: 1px solid #adadad; background: #e1e1e1; }
.dlg-buttons button:first-child { margin-right: auto; color: #888; }
.dlg-buttons .ok { border-color: #2a8ad4; background: #e5f1fb; }

/* Annotations */
.note { position: absolute; left: 1181px; top: 407px; width: 310px; margin: 0; color: #ee1c25; font-size: 35px; line-height: 49px; }
.ink { position: absolute; left: -1px; top: 0; pointer-events: none; }
```
